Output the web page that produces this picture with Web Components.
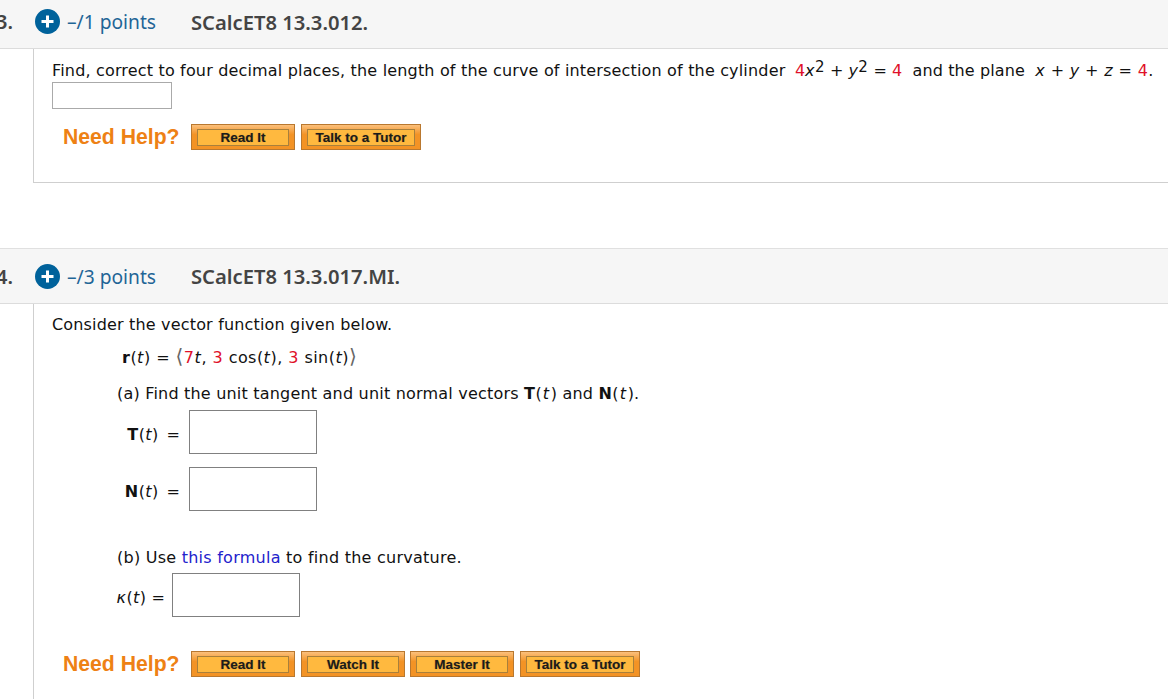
<!DOCTYPE html>
<html>
<head>
<meta charset="utf-8">
<title>Assignment</title>
<style>
    html, body { margin: 0; padding: 0; background: #fff; overflow: hidden; }
    body { width: 1168px; height: 699px; font: 16px "DejaVu Sans", Verdana, sans-serif; color: #111; letter-spacing: .17px; }
    .num { color: #e0102a; }
    .math { letter-spacing: .45px; }
    .eq { letter-spacing: 0; margin-left: -1px; }
    .eq i { letter-spacing: .3px; }
    .eq2 { letter-spacing: .33px; }
    .eq2 i { letter-spacing: .4px; }
    .wide i { margin: 0 1px; }
    .gap { margin-left: 8px; }
    i { font-style: italic; letter-spacing: .6px; }
    b { font-weight: bold; letter-spacing: .5px; }
    sup { font-size: 15px; line-height: 0; vertical-align: 4px; letter-spacing: .5px; }
    .br { font-size: 20px; line-height: 0; color: #666; }
</style>
</head>
<body>
<template id="question-tpl">
    <style>
        :host { display: block; }
        .head {
            display: flex;
            align-items: center;
            box-sizing: border-box;
            height: var(--head-height, 49px);
            padding-bottom: var(--head-pad, 0);
            background: #f6f6f6;
            border-top: var(--head-top, 0) solid #e0e0e0;
            border-bottom: 1px solid #dcdcdc;
            font-family: "Noto Sans", "Open Sans", sans-serif;
            font-size: 19.2px;
            letter-spacing: 0;
            white-space: nowrap;
        }
        .no { width: 39px; margin-left: -4px; font-size: 20px; font-weight: 600; color: #444; flex: none; }
        .plus { width: 25px; height: 25px; flex: none; margin-right: 7px; }
        .pts { width: 124px; color: #1f6596; flex: none; }
        .code { font-size: 20.2px; font-weight: 600; color: #444; }
        .body {
            box-sizing: border-box;
            margin-left: 33px;
            padding-left: 18px;
            height: var(--body-height, auto);
            padding-bottom: var(--body-pad, 0);
            border-left: 1px solid #cfcfcf;
            border-bottom: var(--body-bottom, 0) solid #cfcfcf;
        }
    </style>
    <div class="head">
        <span class="no"><slot name="no"></slot></span>
        <svg class="plus" viewBox="0 0 25 25">
            <circle cx="12.5" cy="12.5" r="12.5" fill="#00629b"/>
            <path d="M12.5 6.5v12M6.5 12.5h12" stroke="#fff" stroke-width="3"/>
        </svg>
        <span class="pts"><slot name="points"></slot></span>
        <span class="code"><slot name="code"></slot></span>
    </div>
    <div class="body"><slot></slot></div>
</template>

<template id="need-help-tpl">
    <style>
        :host { display: flex; align-items: center; gap: 6px; margin-left: 11px; letter-spacing: 0; }
        .label {
            width: 122px;
            font: bold 21.2px "Liberation Sans", Arial, sans-serif;
            color: #ee8114;
            white-space: nowrap;
        }
    </style>
    <span class="label">Need Help?</span>
    <slot></slot>
</template>

<template id="help-button-tpl">
    <style>
        :host {
            display: block;
            box-sizing: border-box;
            height: 26px;
            padding: 4px 5px 3px;
            margin-right: var(--mr, 0);
            background: linear-gradient(#fbc07c, #f39325 40%, #f39325);
            border: 1px solid #b9782f;
        }
        span {
            display: block;
            box-sizing: border-box;
            height: 17px;
            min-width: var(--w, 92px);
            padding: 0 7.5px;
            background: #ffb93f;
            border: 1px solid #a8803c;
            font: bold 13.5px/15px "Liberation Sans", Arial, sans-serif;
            color: #1c1c1c;
            text-shadow: 0 0 1px rgba(0, 0, 0, .35);
            text-align: center;
            white-space: nowrap;
        }
    </style>
    <span><slot></slot></span>
</template>

<template id="answer-box-tpl">
    <style>
        :host {
            display: block;
            box-sizing: border-box;
            flex: none;
            width: var(--w, 128px);
            height: var(--h, 44px);
            background: #fff;
            border: 1px solid var(--bc, #808080);
        }
    </style>
</template>

<template id="math-row-tpl">
    <style>
        :host { display: flex; align-items: center; }
        .lhs { flex: none; width: var(--lhs, 137px); padding: 4px var(--lhs-pad, 9px) 0 0; box-sizing: border-box; text-align: right; white-space: nowrap; }
    </style>
    <span class="lhs"><slot name="lhs"></slot></span>
    <answer-box></answer-box>
</template>

<q-block id="q3" style="--head-height:49px;--head-pad:5px;--body-height:134px;--body-bottom:1px">
    <span slot="no">3.</span>
    <span slot="points">–/1 points</span>
    <span slot="code">SCalcET8 13.3.012.</span>
    <div style="padding-top:10px;line-height:23px;white-space:nowrap">Find, correct to four decimal places, the length of the curve of intersection of the cylinder &nbsp;<span class="eq"><span class="num">4</span><i>x</i><sup>2</sup> + <i>y</i><sup>2</sup> = <span class="num">4</span></span> &nbsp;<span style="letter-spacing:.1px">and the plane</span> &nbsp;<span class="eq2"><i>x</i> + <i>y</i> + <i>z</i> = <span class="num">4</span>.</span></div>
    <answer-box style="--w:120px;--h:27px;--bc:#aaa"></answer-box>
    <need-help style="margin-top:15px">
        <help-button>Read It</help-button>
        <help-button>Talk to a Tutor</help-button>
    </need-help>
</q-block>

<div style="height:65px"></div>

<q-block id="q4" style="--head-height:56px;--head-top:1px;--body-pad:40px">
    <span slot="no">4.</span>
    <span slot="points">–/3 points</span>
    <span slot="code">SCalcET8 13.3.017.MI.</span>
    <div style="padding-top:9px;line-height:24px">Consider the vector function given below.</div>
    <div class="math" style="margin:9px 0 0 70px;line-height:24px"><b>r</b>(<i>t</i>) = <span class="br">⟨</span><span class="num">7</span><i>t</i>, <span class="num">3</span> cos(<i>t</i>), <span class="num">3</span> sin(<i>t</i>)<span class="br">⟩</span></div>
    <div class="wide" style="margin:12px 0 0 65px;line-height:24px;letter-spacing:.2px">(a) Find the unit tangent and unit normal vectors <b>T</b>(<i>t</i>) and <b>N</b>(<i>t</i>).</div>
    <math-row style="margin-top:4px"><span slot="lhs"><b>T</b>(<i>t</i>)<span class="gap">=</span></span></math-row>
    <math-row style="margin-top:13px"><span slot="lhs"><b>N</b>(<i>t</i>)<span class="gap">=</span></span></math-row>
    <div style="margin:35px 0 0 65px;line-height:24px;letter-spacing:.25px">(b) Use <span style="color:#2222cc">this formula</span> to find the curvature.</div>
    <math-row style="--lhs:120px;--lhs-pad:7px;margin-top:3px"><span slot="lhs"><i>κ</i>(<i>t</i>) =</span></math-row>
    <need-help style="margin-top:34px">
        <help-button>Read It</help-button>
        <help-button style="--mr:-1px">Watch It</help-button>
        <help-button>Master It</help-button>
        <help-button>Talk to a Tutor</help-button>
    </need-help>
</q-block>

<script>
    // One small class per template, all of them just clone into an open shadow root
    function defineFromTemplate(tag, tplId) {
        customElements.define(tag, class extends HTMLElement {
            constructor() {
                super();
                const tpl = document.getElementById(tplId);
                this.attachShadow({ mode: 'open' }).appendChild(tpl.content.cloneNode(true));
            }
        });
    }

    defineFromTemplate('answer-box', 'answer-box-tpl');
    defineFromTemplate('help-button', 'help-button-tpl');
    defineFromTemplate('need-help', 'need-help-tpl');
    defineFromTemplate('math-row', 'math-row-tpl');
    defineFromTemplate('q-block', 'question-tpl');
</script>
</body>
</html>
